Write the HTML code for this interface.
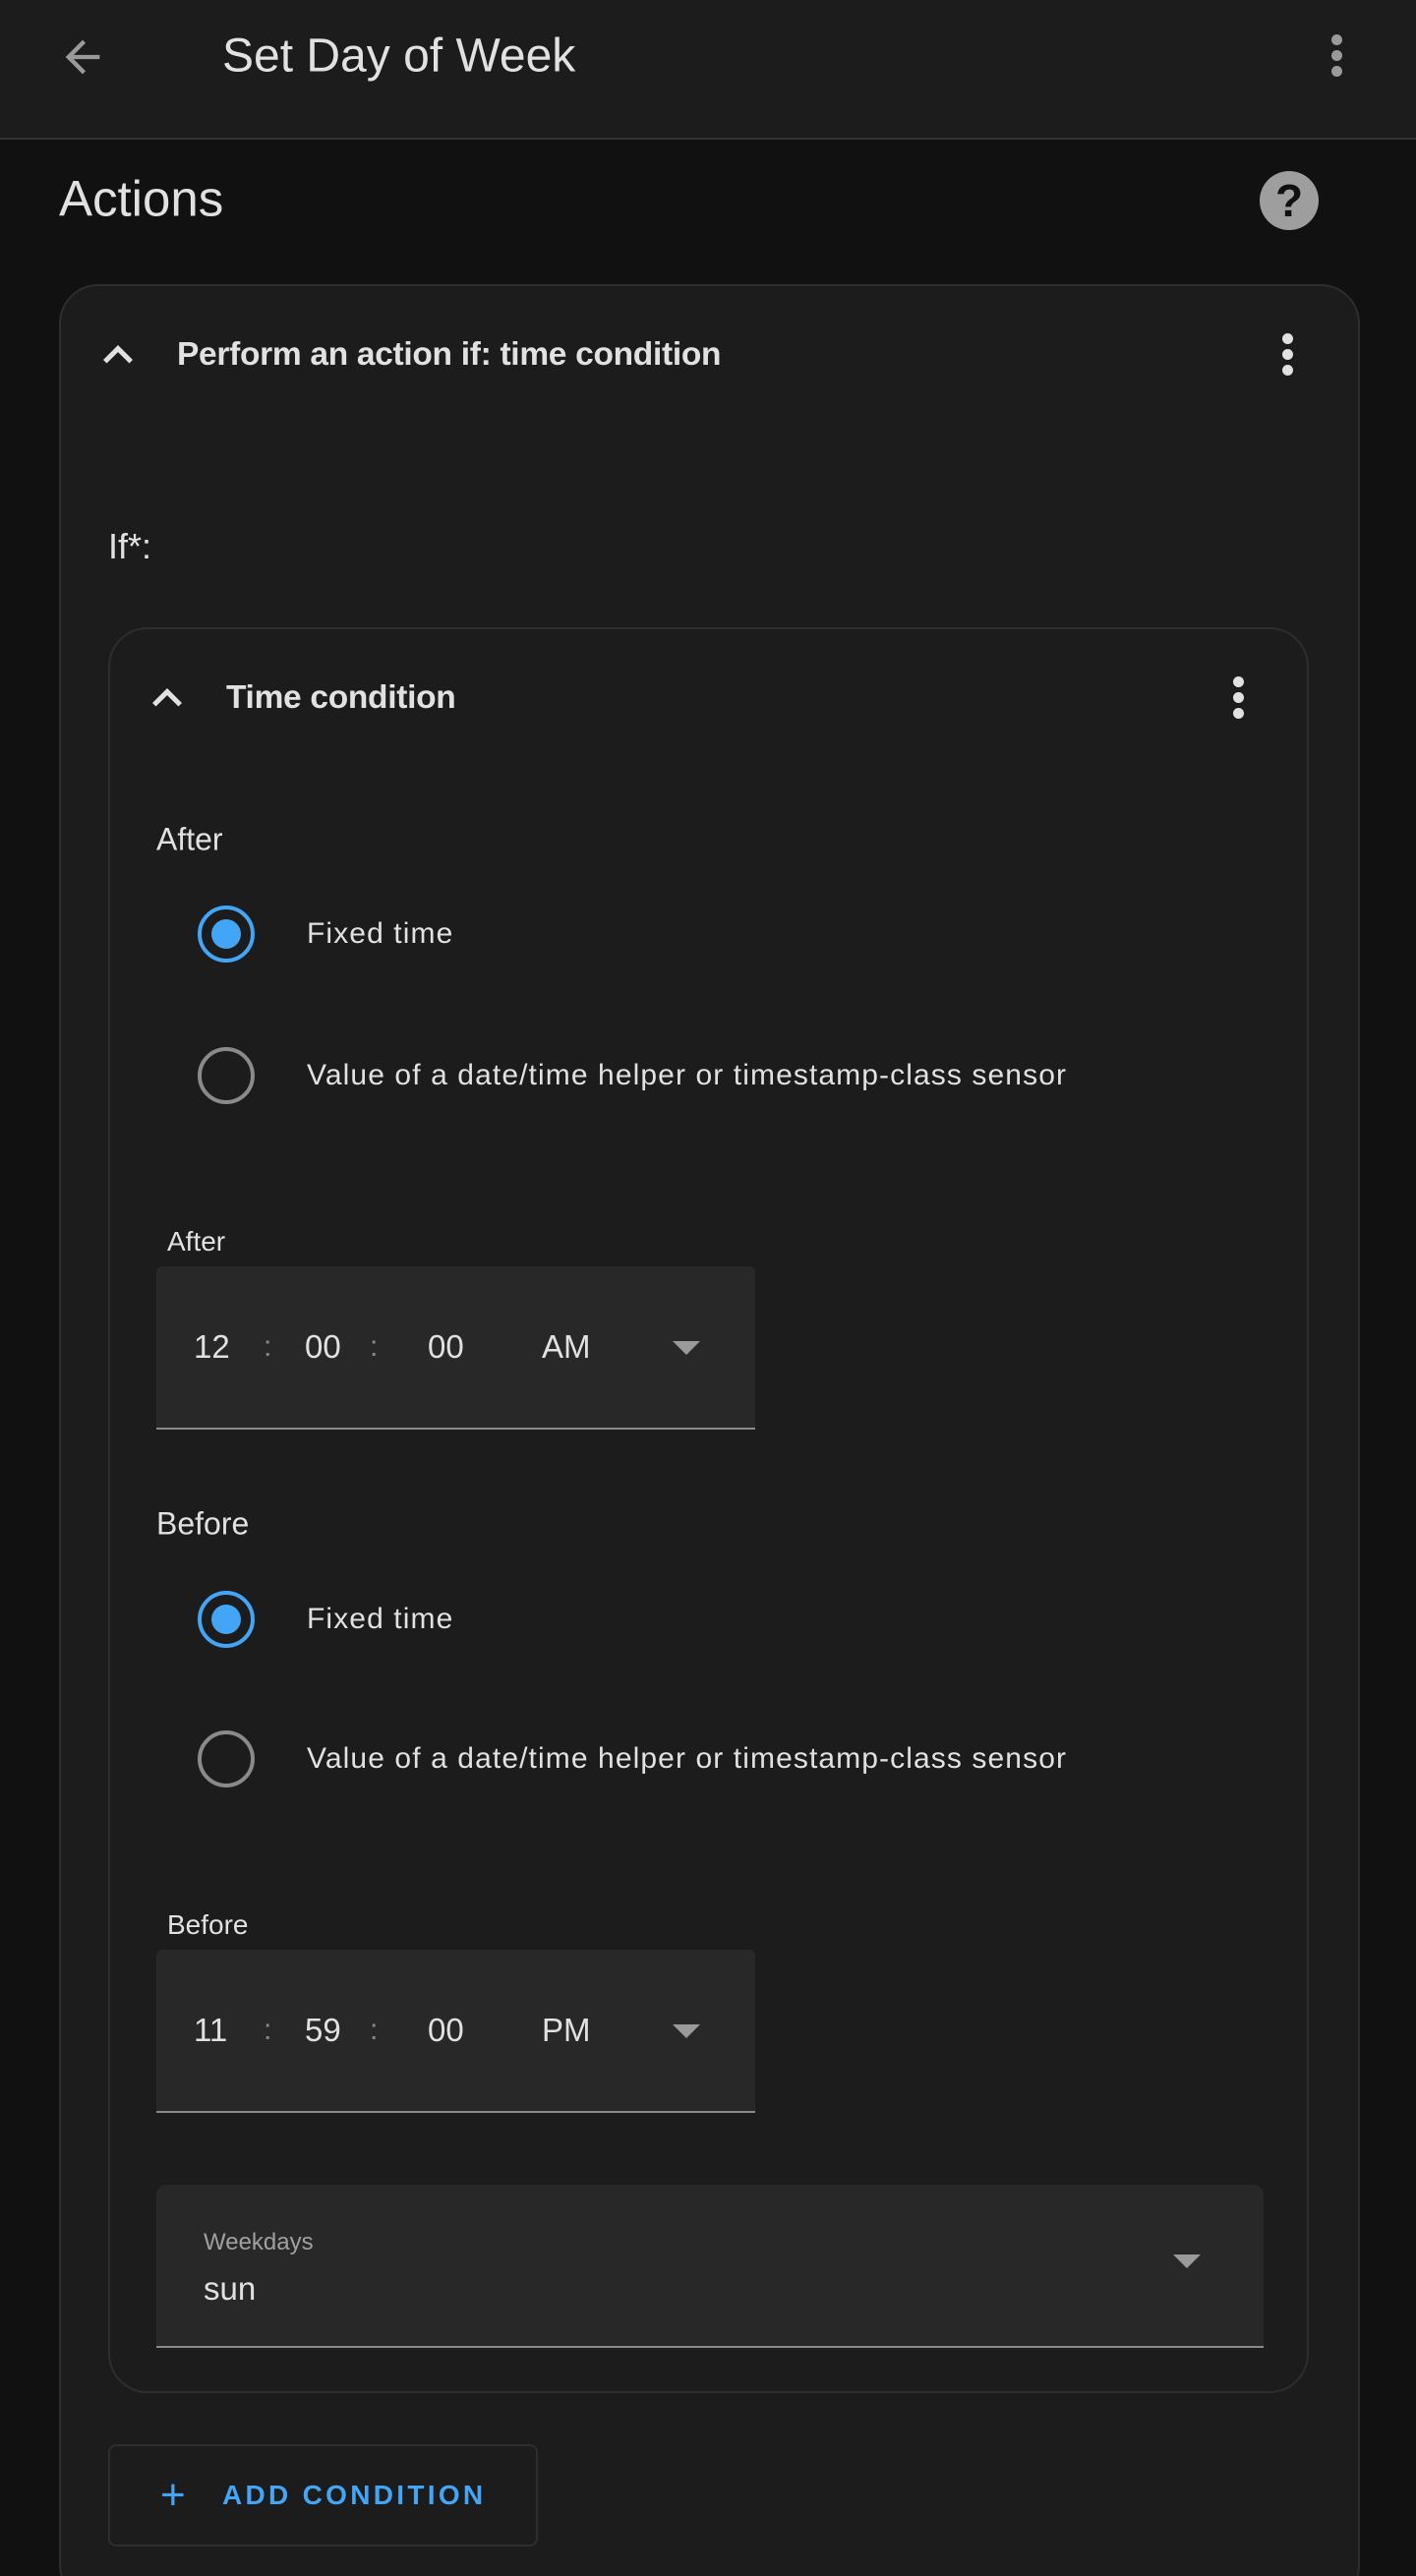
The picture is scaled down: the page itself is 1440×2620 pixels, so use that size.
<!DOCTYPE html>
<html><head><meta charset="utf-8"><style>
*{margin:0;padding:0;box-sizing:border-box}
html{width:1440px;height:2620px;overflow:hidden}
body{width:1440px;height:2620px;background:#111111;font-family:"Liberation Sans",sans-serif;color:#e1e1e1;position:relative;overflow:hidden}
.a{position:absolute;white-space:nowrap}
.vc{transform:translateY(-50%)}
.lbl{font-size:30px;letter-spacing:1.1px}
.dots{position:absolute;width:12px}
.dots i{display:block;width:11px;height:11px;border-radius:50%;background:#e1e1e1;margin-bottom:5px}
.field{position:absolute;background:#282828;border-bottom:2px solid #8a8a8a;border-radius:6px 6px 0 0}
.radio{position:absolute;width:58px;height:58px;border-radius:50%;border:4px solid #8a8a8a}
.radio.on{border-color:#42a5f5}
.radio.on::after{content:"";position:absolute;left:10px;top:10px;width:30px;height:30px;border-radius:50%;background:#42a5f5}
.tri{position:absolute;width:0;height:0;border-left:14px solid transparent;border-right:14px solid transparent;border-top:14px solid #9a9a9a}
</style></head><body>
<div class="a" style="left:0;top:0;width:1440px;height:142px;background:#1c1c1c;border-bottom:2px solid #333"></div>
<svg class="a" style="left:58px;top:32px" width="52" height="52" viewBox="0 0 24 24"><path d="M20 11H7.83l5.59-5.59L12 4l-8 8 8 8 1.41-1.41L7.83 13H20v-2z" fill="#9a9a9a"/></svg>
<div class="a vc" style="left:226px;top:57px;font-size:48px;color:#e1e1e1">Set Day of Week</div>
<div class="dots" style="left:1354px;top:35px"><i style="background:#9a9a9a"></i><i style="background:#9a9a9a"></i><i style="background:#9a9a9a"></i></div>

<div class="a vc" style="left:60px;top:202px;font-size:51px">Actions</div>
<div class="a" style="left:1281px;top:174px;width:60px;height:60px;border-radius:50%;background:#9e9e9e;color:#111;font-weight:bold;font-size:46px;text-align:center;line-height:60px">?</div>

<div class="a" style="left:60px;top:289px;width:1323px;height:2360px;border:2px solid #2e2e2e;border-radius:40px;background:#1c1c1c"></div>
<svg class="a" style="left:90px;top:331px" width="60" height="60" viewBox="0 0 24 24"><path d="M7.41 15.41L12 10.83l4.59 4.58L18 14l-6-6-6 6z" fill="#e1e1e1"/></svg>
<div class="a vc" style="left:180px;top:361px;font-size:33.5px;font-weight:bold;letter-spacing:-0.3px">Perform an action if: time condition</div>
<div class="dots" style="left:1304px;top:339px"><i></i><i></i><i></i></div>

<div class="a vc" style="left:110px;top:556px;font-size:36px">If*:</div>

<div class="a" style="left:110px;top:638px;width:1221px;height:1796px;border:2px solid #2e2e2e;border-radius:40px;background:#1c1c1c"></div>
<svg class="a" style="left:140px;top:680px" width="60" height="60" viewBox="0 0 24 24"><path d="M7.41 15.41L12 10.83l4.59 4.58L18 14l-6-6-6 6z" fill="#e1e1e1"/></svg>
<div class="a vc" style="left:230px;top:710px;font-size:33.5px;font-weight:bold;letter-spacing:-0.3px">Time condition</div>
<div class="dots" style="left:1254px;top:688px"><i></i><i></i><i></i></div>

<div class="a vc" style="left:159px;top:854px;font-size:32px">After</div>
<div class="radio on" style="left:201px;top:921px"></div>
<div class="a vc lbl" style="left:312px;top:950px">Fixed time</div>
<div class="radio" style="left:201px;top:1065px"></div>
<div class="a vc lbl" style="left:312px;top:1094px">Value of a date/time helper or timestamp-class sensor</div>

<div class="a vc" style="left:170px;top:1263px;font-size:28px">After</div>
<div class="field" style="left:159px;top:1288px;width:609px;height:166px"></div>
<div class="a vc" style="left:197px;top:1370px;font-size:33px">12</div>
<div class="a vc" style="left:268px;top:1370px;font-size:30px;color:#888">:</div>
<div class="a vc" style="left:310px;top:1370px;font-size:33px">00</div>
<div class="a vc" style="left:376px;top:1370px;font-size:30px;color:#888">:</div>
<div class="a vc" style="left:435px;top:1370px;font-size:33px">00</div>
<div class="a vc" style="left:551px;top:1370px;font-size:33px">AM</div>
<div class="tri" style="left:684px;top:1364px"></div>

<div class="a vc" style="left:159px;top:1550px;font-size:32px">Before</div>
<div class="radio on" style="left:201px;top:1618px"></div>
<div class="a vc lbl" style="left:312px;top:1647px">Fixed time</div>
<div class="radio" style="left:201px;top:1760px"></div>
<div class="a vc lbl" style="left:312px;top:1789px">Value of a date/time helper or timestamp-class sensor</div>

<div class="a vc" style="left:170px;top:1958px;font-size:28px">Before</div>
<div class="field" style="left:159px;top:1983px;width:609px;height:166px"></div>
<div class="a vc" style="left:197px;top:2065px;font-size:33px">11</div>
<div class="a vc" style="left:268px;top:2065px;font-size:30px;color:#888">:</div>
<div class="a vc" style="left:310px;top:2065px;font-size:33px">59</div>
<div class="a vc" style="left:376px;top:2065px;font-size:30px;color:#888">:</div>
<div class="a vc" style="left:435px;top:2065px;font-size:33px">00</div>
<div class="a vc" style="left:551px;top:2065px;font-size:33px">PM</div>
<div class="tri" style="left:684px;top:2059px"></div>

<div class="field" style="left:159px;top:2222px;width:1126px;height:166px;border-radius:10px 10px 0 0"></div>
<div class="a vc" style="left:207px;top:2281px;font-size:24px;color:#a0a0a0">Weekdays</div>
<div class="a vc" style="left:207px;top:2328px;font-size:33px">sun</div>
<div class="tri" style="left:1193px;top:2293px"></div>

<div class="a" style="left:110px;top:2486px;width:437px;height:104px;border:2px solid #2e2e2e;border-radius:8px"></div>
<div class="a vc" style="left:163px;top:2538px;font-size:44px;color:#42a5f5;font-weight:300">+</div>
<div class="a vc" style="left:226px;top:2538px;font-size:28px;color:#42a5f5;font-weight:bold;letter-spacing:3.3px">ADD CONDITION</div>
</body></html>
